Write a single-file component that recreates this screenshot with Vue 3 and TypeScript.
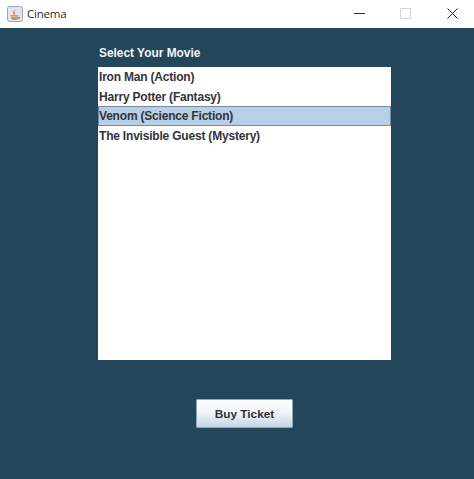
<script setup lang="ts">
const movies: string[] = [
  'Iron Man (Action)',
  'Harry Potter (Fantasy)',
  'Venom (Science Fiction)',
  'The Invisible Guest (Mystery)',
]
const selected = 2
</script>

<template>
  <div class="window">
    <header class="titlebar">
      <div class="title">
        <svg class="app-icon" width="16" height="16" viewBox="0 0 16 16">
          <rect x="0.5" y="0.5" width="15" height="15" rx="2" fill="#dfe5ee" stroke="#9aa6b8" />
          <path d="M4 10.5h7v1.5a2 2 0 0 1-2 2H6a2 2 0 0 1-2-2z" fill="#c9955f" />
          <path d="M11 11h1.6v1.6H11z" fill="none" stroke="#b58550" stroke-width="0.8" />
          <path d="M7.5 3c1.4 1.3-.8 2.2.3 3.4.6.7.4 1.6-.2 2.6-1.8-1-2.3-2.4-1.3-3.6.6-.8 1.3-1.3 1.2-2.4z" fill="#d98a5a" />
          <path d="M3.5 9.6h8" stroke="#7f93ad" stroke-width="0.8" />
        </svg>
        <span>Cinema</span>
      </div>
      <div class="controls">
        <svg class="ctl min" width="11" height="11" viewBox="0 0 11 11"><path d="M0 5.5h11" stroke="#333" stroke-width="1" /></svg>
        <svg class="ctl max" width="11" height="11" viewBox="0 0 11 11"><rect x="0.5" y="0.5" width="10" height="10" fill="none" stroke="#d6d6d6" /></svg>
        <svg class="ctl close" width="11" height="11" viewBox="0 0 11 11"><path d="M0.5 0.5l10 10M10.5 0.5l-10 10" stroke="#222" stroke-width="1" /></svg>
      </div>
    </header>

    <main class="content">
      <div class="panel">
        <div class="label">Select Your Movie</div>
        <ul class="list">
          <li
            v-for="(movie, i) in movies"
            :key="movie"
            class="item"
            :class="{ selected: i === selected }"
          >{{ movie }}</li>
        </ul>
      </div>
      <button class="buy" type="button">Buy Ticket</button>
    </main>
  </div>
</template>

<style>
html, body { margin: 0; padding: 0; background: #24465a; }
</style>

<style scoped>
.window {
  width: 474px;
  height: 479px;
  display: flex;
  flex-direction: column;
  overflow: hidden;
  background: #24465a;
  font-family: "Liberation Sans", Arial, sans-serif;
}
.titlebar {
  height: 28px;
  flex: none;
  background: #fff;
  display: flex;
  align-items: center;
  justify-content: space-between;
}
.title {
  display: flex;
  align-items: center;
  gap: 4px;
  padding-left: 7px;
  margin-top: -1px;
  font-family: "Open Sans", "Noto Sans", sans-serif;
  font-size: 11.5px;
  letter-spacing: -0.2px;
  color: #2a2a2a;
}
.controls {
  display: flex;
  align-items: center;
  margin-top: -2px;
  padding-right: 16px;
}
.ctl { display: block; }
.min { margin-right: 35px; }
.max { margin-right: 36px; }
.content {
  flex: 1;
  display: flex;
  flex-direction: column;
  padding: 17px 0 0 98px;
}
.panel { width: 293px; }
.label {
  height: 22px;
  padding-left: 1px;
  font-size: 11.9px;
  font-weight: 700;
  line-height: 16px;
  color: #f1f4f6;
}
.list {
  list-style: none;
  margin: 0;
  padding: 0;
  height: 293px;
  box-sizing: border-box;
  background: #fff;
}
.item {
  height: 19.6px;
  box-sizing: border-box;
  padding-left: 1px;
  font-size: 12px;
  font-weight: 700;
  letter-spacing: -0.2px;
  line-height: 20px;
  color: #33333b;
}
.item.selected {
  background: #b8cfe5;
  outline: 1px solid #7488aa;
  outline-offset: -1px;
}
.buy {
  align-self: flex-start;
  margin: 39px 0 0 98px;
  width: 97px;
  height: 29px;
  padding: 0;
  border: 1px solid #8aa8c2;
  border-radius: 1px;
  background: linear-gradient(to bottom, #fdfefe 0%, #f1f5f9 45%, #c4d6e6 100%);
  font-family: "Liberation Sans", Arial, sans-serif;
  font-size: 11.8px;
  font-weight: 700;
  color: #2e2e36;
}
</style>
